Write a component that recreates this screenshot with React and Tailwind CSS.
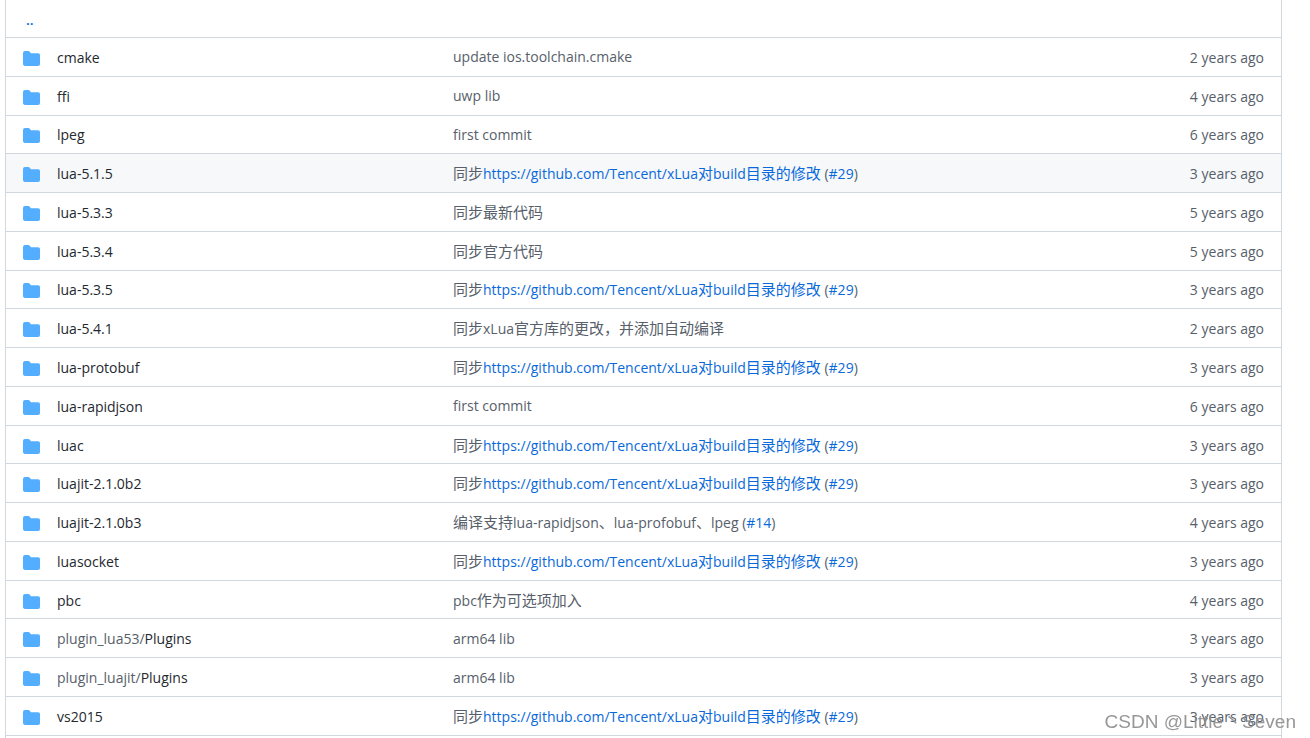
import { clsx } from 'clsx';

const REPO = 'https://github.com/Tencent/xLua';
const sync = { pre: '同步', url: true, issue: '#29' };

const files = [
    { name: 'cmake', message: { text: 'update ios.toolchain.cmake' }, age: '2 years ago' },
    { name: 'ffi', message: { text: 'uwp lib' }, age: '4 years ago' },
    { name: 'lpeg', message: { text: 'first commit' }, age: '6 years ago' },
    { name: 'lua-5.1.5', message: sync, age: '3 years ago', active: true },
    { name: 'lua-5.3.3', message: { text: '同步最新代码' }, age: '5 years ago' },
    { name: 'lua-5.3.4', message: { text: '同步官方代码' }, age: '5 years ago' },
    { name: 'lua-5.3.5', message: sync, age: '3 years ago' },
    { name: 'lua-5.4.1', message: { text: '同步xLua官方库的更改，并添加自动编译' }, age: '2 years ago' },
    { name: 'lua-protobuf', message: sync, age: '3 years ago' },
    { name: 'lua-rapidjson', message: { text: 'first commit' }, age: '6 years ago' },
    { name: 'luac', message: sync, age: '3 years ago' },
    { name: 'luajit-2.1.0b2', message: sync, age: '3 years ago' },
    { name: 'luajit-2.1.0b3', message: { text: '编译支持lua-rapidjson、lua-profobuf、lpeg ', issue: '#14' }, age: '4 years ago' },
    { name: 'luasocket', message: sync, age: '3 years ago' },
    { name: 'pbc', message: { text: 'pbc作为可选项加入' }, age: '4 years ago' },
    { parent: 'plugin_lua53/', name: 'Plugins', message: { text: 'arm64 lib' }, age: '3 years ago' },
    { parent: 'plugin_luajit/', name: 'Plugins', message: { text: 'arm64 lib' }, age: '3 years ago' },
    { name: 'vs2015', message: sync, age: '3 years ago' }
];

// Chinese runs are set one step larger than the Latin text around them
function Mixed({ children }) {
    return children.split(/([\u3000-\u9fff\uff00-\uffef]+)/).map((part, i) => (
        i % 2 ? <span key={i} className="text-[15px]">{part}</span> : part
    ));
}

function FolderIcon() {
    return (
        <svg viewBox="0 0 16 16" className="block size-[17px] text-[#54aeff]" fill="currentColor" aria-hidden="true">
            <path d="M1.75 1A1.75 1.75 0 0 0 0 2.75v10.5C0 14.216.784 15 1.75 15h12.5A1.75 1.75 0 0 0 16 13.25v-8.5A1.75 1.75 0 0 0 14.25 3H7.5a.25.25 0 0 1-.2-.1l-.9-1.2C6.07 1.26 5.55 1 5 1H1.75Z" />
        </svg>
    );
}

function Message({ message }) {
    return (
        <>
            {message.pre && <Mixed>{message.pre}</Mixed>}
            {message.text && <Mixed>{message.text}</Mixed>}
            {message.url && (
                <><a href={REPO} className="text-[#0969da]"><Mixed>{`${REPO}对build目录的修改`}</Mixed></a>{' '}</>
            )}
            {message.issue && <>(<a href="#" className="text-[#0969da]">{message.issue}</a>)</>}
        </>
    );
}

export default function App() {
    return (
        <div className="h-screen overflow-hidden bg-white pl-[5px] pr-7 font-['Open_Sans','Noto_Sans_CJK_SC',sans-serif] text-sm leading-5 text-[#57606a]">
            <div className="h-full border-x border-[#d0d7de] pb-0.5">
                <table className="h-full w-full table-fixed border-separate border-spacing-0">
                    <colgroup>
                        <col className="w-[51px]" />
                        <col className="w-[396px]" />
                        <col />
                        <col className="w-40" />
                    </colgroup>
                    <tbody>
                        <tr className="h-[38px]">
                            <td colSpan={4} className="border-b border-[#d0d7de] pl-5 pt-0.5">
                                <a href="#" className="font-semibold text-[#0969da]">..</a>
                            </td>
                        </tr>
                        {files.map((file, i) => (
                            <tr key={i} className={clsx(file.active && 'bg-[#f6f8fa]')}>
                                <td className="border-b border-[#d0d7de] pl-[17px] pt-[3px]"><FolderIcon /></td>
                                <td className="border-b border-[#d0d7de] pt-0.5">
                                    <a href="#" className="text-[#24292f]">
                                        {file.parent && <span className="text-[#57606a]">{file.parent}</span>}
                                        {file.name}
                                    </a>
                                </td>
                                <td className="truncate border-b border-[#d0d7de] pt-px"><Message message={file.message} /></td>
                                <td className="border-b border-[#d0d7de] pr-[17px] pt-0.5 text-right">{file.age}</td>
                            </tr>
                        ))}
                    </tbody>
                </table>
            </div>
            <p className="fixed bottom-1 right-3.5 font-['Liberation_Sans','Noto_Sans_CJK_SC',sans-serif] text-[19px] leading-6 text-[#8c8c8c]/90">
                CSDN @Little丶Seven
            </p>
        </div>
    );
}
